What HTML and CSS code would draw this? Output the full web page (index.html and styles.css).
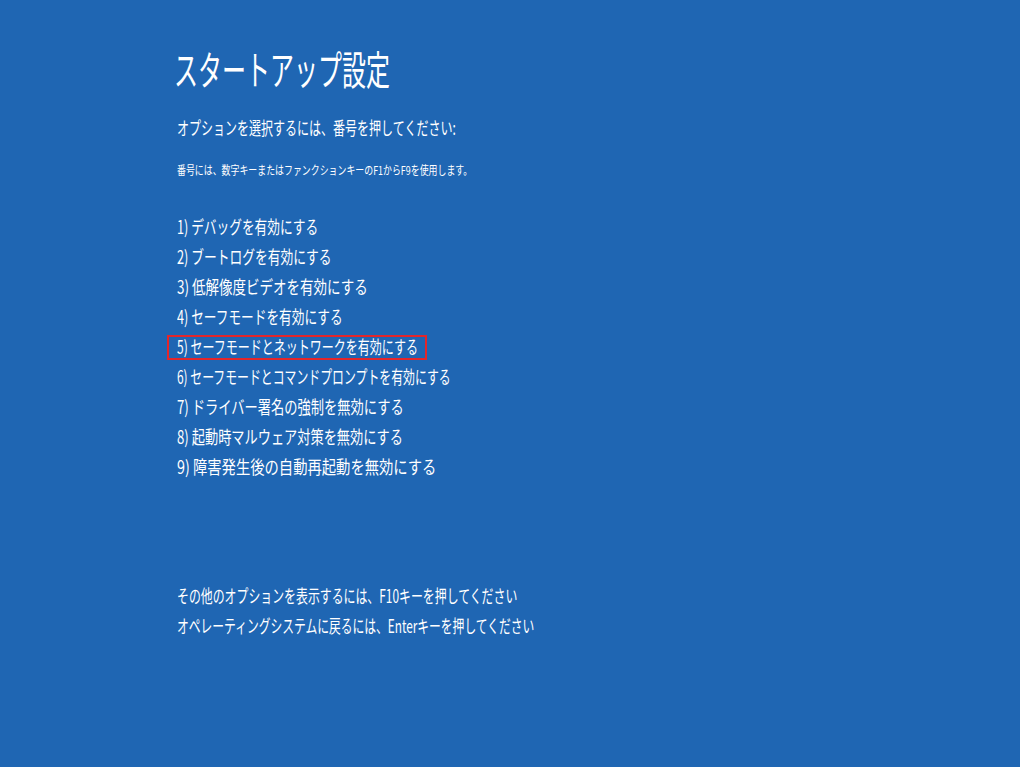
FILE: index.html
```html
<!DOCTYPE html>
<html lang="ja">
<head>
<meta charset="utf-8">
<link rel="stylesheet" href="styles.css">
</head>
<body>
<main class="screen">
  <h1 class="title"><span class="sq">スタートアップ設定</span></h1>
  <p class="prompt"><span class="sq">オプションを選択するには、番号を押してください:</span></p>
  <p class="note"><span class="sq">番号には、数字キーまたはファンクションキーのF1からF9を使用します。</span></p>
  <ol class="options">
    <li><span class="sq">1) デバッグを有効にする</span></li>
    <li><span class="sq">2) ブートログを有効にする</span></li>
    <li><span class="sq">3) 低解像度ビデオを有効にする</span></li>
    <li><span class="sq">4) セーフモードを有効にする</span></li>
    <li class="selected"><span class="sq">5) セーフモードとネットワークを有効にする</span></li>
    <li><span class="sq">6) セーフモードとコマンドプロンプトを有効にする</span></li>
    <li><span class="sq">7) ドライバー署名の強制を無効にする</span></li>
    <li><span class="sq">8) 起動時マルウェア対策を無効にする</span></li>
    <li><span class="sq">9) 障害発生後の自動再起動を無効にする</span></li>
  </ol>
  <div class="footer">
    <p class="f1"><span class="sq">その他のオプションを表示するには、F10キーを押してください</span></p>
    <p class="f2"><span class="sq">オペレーティングシステムに戻るには、Enterキーを押してください</span></p>
  </div>
</main>
</body>
</html>
```
FILE: styles.css
```css
html, body {
  margin: 0;
  padding: 0;
  background: #1f66b3;
  height: 100%;
}
body {
  font-family: "Noto Sans CJK JP", "Noto Sans", sans-serif;
  color: #ffffff;
  overflow: hidden;
}
.screen {
  padding: 44px 0 0 177px;
}
.sq {
  display: inline-block;
  transform: scaleX(0.7);
  transform-origin: left center;
  white-space: nowrap;
}
.title {
  margin: 0 0 0 -3px;
  font-size: 40px;
  font-weight: 400;
  line-height: 48px;
}
.title .sq { transform: scaleX(0.6); }
.prompt {
  margin: 22px 0 0 0;
  font-size: 18px;
  line-height: 26px;
}
.prompt .sq { transform: scaleX(0.667); }
.note {
  margin: 22px 0 0 0;
  font-size: 12px;
  line-height: 16px;
}
.note .sq { transform: scaleX(0.743); }
.options {
  list-style: none;
  margin: 33px 0 0 0;
  padding: 0;
  font-size: 18px;
  line-height: 30px;
}
.options li {
  position: relative;
}
.options li:nth-child(1) .sq { transform: scaleX(0.705); }
.options li:nth-child(2) .sq { transform: scaleX(0.708); }
.options li:nth-child(3) .sq { transform: scaleX(0.75); }
.options li:nth-child(4) .sq { transform: scaleX(0.704); }
.options li:nth-child(5) .sq { transform: scaleX(0.667); }
.options li:nth-child(6) .sq { transform: scaleX(0.66); }
.options li:nth-child(7) .sq { transform: scaleX(0.736); }
.options li:nth-child(8) .sq { transform: scaleX(0.733); }
.options li:nth-child(9) .sq { transform: scaleX(0.795); }
.selected::before {
  content: "";
  position: absolute;
  left: -10px;
  top: 4px;
  width: 256px;
  height: 21px;
  border: 2px solid #e3262b;
}
.footer {
  margin-top: 99px;
  font-size: 18px;
  line-height: 30px;
}
.footer p { margin: 0; }
.footer .f1 .sq { transform: scaleX(0.661); }
.footer .f2 .sq { transform: scaleX(0.654); }
```
